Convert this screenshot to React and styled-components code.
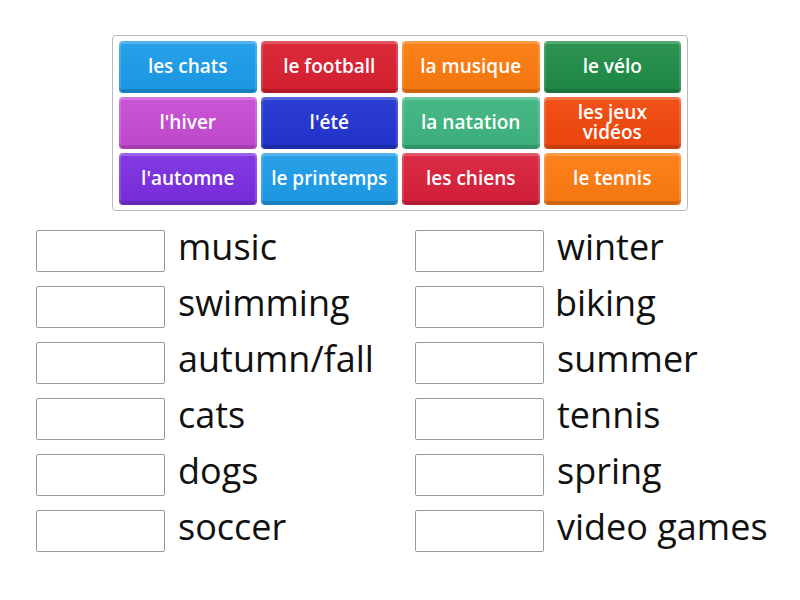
import React from 'react';
import styled, { createGlobalStyle } from 'styled-components';

const GlobalStyle = createGlobalStyle`
  body {
    margin: 0;
    background: #fff;
    font-family: "Open Sans", "Liberation Sans", sans-serif;
  }
`;

const Page = styled.div`
  width: 800px;
  height: 600px;
  display: flex;
  flex-direction: column;
  align-items: flex-start;
  padding-top: 35px;
  box-sizing: border-box;
`;

const Bank = styled.div`
  margin-left: 112px;
  width: 576px;
  box-sizing: border-box;
  border: 1px solid #b9b9b9;
  border-radius: 4px;
  padding: 5px 6px 5px 6px;
  display: grid;
  grid-template-columns: repeat(4, 1fr);
  grid-auto-rows: 52px;
  gap: 4px;
`;

const Tile = styled.div`
  background: ${p => p.$bg};
  background-image: linear-gradient(to bottom, rgba(255,255,255,0.06), rgba(0,0,0,0.04));
  border-radius: 4px;
  box-shadow:
    inset 2px 0 0 rgba(255, 255, 255, 0.14),
    inset -2px 0 0 rgba(255, 255, 255, 0.14),
    inset 0 3px 0 rgba(255, 255, 255, 0.2),
    inset 0 -4px 0 rgba(0, 0, 0, 0.14);
  display: flex;
  align-items: center;
  justify-content: center;
  text-align: center;
  color: #fff;
  font-size: 19px;
  font-weight: 600;
  line-height: 20px;
  padding: 0 4px 2px;
`;

const Answers = styled.div`
  margin-top: 19px;
  margin-left: 36px;
  display: grid;
  grid-template-columns: 379px 379px;
  grid-auto-flow: column;
  grid-template-rows: repeat(6, 42px);
  row-gap: 14px;
`;

const Row = styled.div`
  display: flex;
  align-items: center;
  gap: ${p => p.$gap || 13}px;
`;

const Slot = styled.div`
  width: 129px;
  height: 42px;
  box-sizing: border-box;
  border: 1px solid #9a9a9a;
  border-radius: 2px;
  background: #fff;
  flex: none;
`;

const Label = styled.span`
  font-size: 36px;
  color: #111;
  line-height: 1;
  padding-bottom: 8px;
  white-space: nowrap;
`;

const tiles = [
  ['les chats', '#1a9be8'],
  ['le football', '#d91f30'],
  ['la musique', '#fb7a0c'],
  ['le vélo', '#1f8c47'],
  ["l'hiver", '#c64ad3'],
  ["l'été", '#2133d0'],
  ['la natation', '#3db47f'],
  ['les jeux vidéos', '#f2470c'],
  ["l'automne", '#7a2ee0'],
  ['le printemps', '#1c9ce8'],
  ['les chiens', '#d91f3a'],
  ['le tennis', '#fd7b10'],
];

const left = ['music', 'swimming', 'autumn/fall', 'cats', 'dogs', 'soccer'];
const right = ['winter', 'biking', 'summer', 'tennis', 'spring', 'video games'];

export default function App() {
  return (
    <Page>
      <GlobalStyle />
      <Bank>
        {tiles.map(([t, c]) => (
          <Tile key={t} $bg={c}>{t}</Tile>
        ))}
      </Bank>
      <Answers>
        {left.map(w => (
          <Row key={w}>
            <Slot />
            <Label>{w}</Label>
          </Row>
        ))}
        {right.map(w => (
          <Row key={w} $gap={w === 'biking' ? 11 : 13}>
            <Slot />
            <Label>{w}</Label>
          </Row>
        ))}
      </Answers>
    </Page>
  );
}
